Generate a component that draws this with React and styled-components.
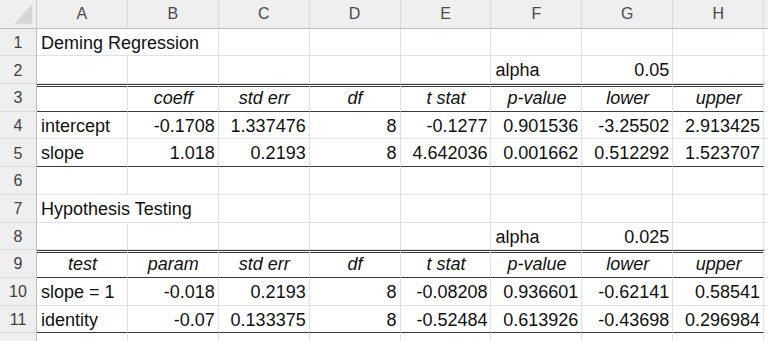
import React from "react";
import styled, { createGlobalStyle } from "styled-components";

const GlobalStyle = createGlobalStyle`
  html, body {
    margin: 0;
    padding: 0;
    background: #ffffff;
  }
  body {
    font-family: "Liberation Sans", Arial, sans-serif;
  }
`;

const Sheet = styled.div`
  display: grid;
  grid-template-columns: 37px repeat(8, 90.9px) 1fr;
  grid-template-rows: 28.7px repeat(12, 27.7px);
  height: 341px;
  overflow: hidden;
  background: #ffffff;
`;

const Corner = styled.div`
  box-sizing: border-box;
  background: #efefef;
  border-right: 1px solid #cfcfcf;
  border-bottom: 1.5px solid #bdbdbd;
  display: flex;
  align-items: flex-end;
  justify-content: flex-end;
  padding: 0 4px 4px 0;
`;

const Triangle = styled.div`
  width: 18px;
  height: 19px;
  background: #d6d6d6;
  clip-path: polygon(100% 0, 100% 100%, 0 100%);
`;

const ColHead = styled.div`
  box-sizing: border-box;
  background: #efefef;
  border-right: 1px solid #d9d9d9;
  border-bottom: 1.5px solid #bdbdbd;
  display: flex;
  align-items: center;
  justify-content: center;
  font-size: 16px;
  color: #4a4a4a;
`;

const RowHead = styled.div`
  box-sizing: border-box;
  background: #efefef;
  border-right: 1.5px solid #bdbdbd;
  border-bottom: 1px solid #d9d9d9;
  display: flex;
  align-items: flex-end;
  justify-content: center;
  padding-bottom: 3px;
  font-size: 16px;
  line-height: 1.15;
  color: #404040;
`;

const Cell = styled.div`
  box-sizing: border-box;
  grid-column: span ${(p) => p.$span || 1};
  border-right: 1px solid #e1e1e1;
  border-top: ${(p) => (p.$double ? "3px double #3a3a3a" : "none")};
  border-bottom: 1px solid ${(p) => (p.$rule ? "#3a3a3a" : "#e1e1e1")};
  display: flex;
  align-items: flex-end;
  justify-content: ${(p) =>
    p.$align === "right" ? "flex-end" : p.$align === "center" ? "center" : "flex-start"};
  padding: 0 3px 2px 4px;
  font-size: 18px;
  line-height: 1.15;
  font-style: ${(p) => (p.$italic ? "italic" : "normal")};
  color: #111111;
  white-space: nowrap;
`;

const cols = ["A", "B", "C", "D", "E", "F", "G", "H"];

const blank = (n) => Array.from({ length: n }, () => ({ v: "" }));
const heads = (list) => list.map((v) => ({ v, align: "center", italic: true }));
const nums = (label, list) => [
  { v: label },
  ...list.map((v) => ({ v, align: "right" })),
];

const rows = [
  { cells: [{ v: "Deming Regression", span: 2 }, ...blank(6)] },
  {
    cells: [
      ...blank(5),
      { v: "alpha" },
      { v: "0.05", align: "right" },
      { v: "" },
    ],
  },
  {
    double: true,
    rule: true,
    cells: [
      { v: "" },
      ...heads(["coeff", "std err", "df", "t stat", "p-value", "lower", "upper"]),
    ],
  },
  {
    cells: nums("intercept", [
      "-0.1708",
      "1.337476",
      "8",
      "-0.1277",
      "0.901536",
      "-3.25502",
      "2.913425",
    ]),
  },
  {
    rule: true,
    cells: nums("slope", [
      "1.018",
      "0.2193",
      "8",
      "4.642036",
      "0.001662",
      "0.512292",
      "1.523707",
    ]),
  },
  { cells: blank(8) },
  { cells: [{ v: "Hypothesis Testing", span: 2 }, ...blank(6)] },
  {
    cells: [
      ...blank(5),
      { v: "alpha" },
      { v: "0.025", align: "right" },
      { v: "" },
    ],
  },
  {
    double: true,
    rule: true,
    cells: heads(["test", "param", "std err", "df", "t stat", "p-value", "lower", "upper"]),
  },
  {
    cells: nums("slope = 1", [
      "-0.018",
      "0.2193",
      "8",
      "-0.08208",
      "0.936601",
      "-0.62141",
      "0.58541",
    ]),
  },
  {
    rule: true,
    cells: nums("identity", [
      "-0.07",
      "0.133375",
      "8",
      "-0.52484",
      "0.613926",
      "-0.43698",
      "0.296984",
    ]),
  },
  // row 12 only peeks in at the bottom edge, its number is below the fold
  { cells: blank(8), hideNumber: true },
];

const App = () => {
  return (
    <>
      <GlobalStyle />
      <Sheet>
        <Corner>
          <Triangle />
        </Corner>
        {cols.map((c) => (
          <ColHead key={c}>{c}</ColHead>
        ))}
        <ColHead />
        {rows.map((row, i) => (
          <React.Fragment key={i}>
            <RowHead>{row.hideNumber ? "" : i + 1}</RowHead>
            {row.cells.map((cell, j) => (
              <Cell
                key={j}
                $span={cell.span}
                $align={cell.align}
                $italic={cell.italic}
                $double={row.double}
                $rule={row.rule}
              >
                {cell.v}
              </Cell>
            ))}
            <Cell />
          </React.Fragment>
        ))}
      </Sheet>
    </>
  );
};

export default App;
